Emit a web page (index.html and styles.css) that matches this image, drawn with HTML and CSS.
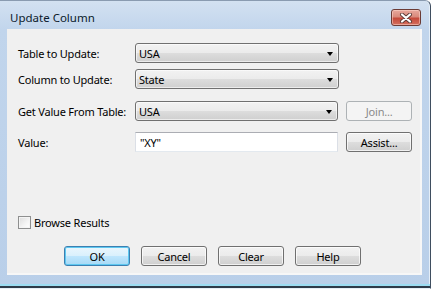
FILE: index.html
```
<!DOCTYPE html>
<html>
<head>
<meta charset="utf-8">
<title>Update Column</title>
<link rel="stylesheet" href="styles.css">
</head>
<body>
<div class="window">
  <div class="titlebar">
    <span class="title">Update Column</span>
    <div class="close" aria-label="Close">
      <svg width="14" height="10" viewBox="0 0 14 10">
        <path d="M3 1.5 L11 8.5 M11 1.5 L3 8.5" stroke="#5b3a36" stroke-width="4" stroke-linecap="round"/>
        <path d="M3 1.5 L11 8.5 M11 1.5 L3 8.5" stroke="#ffffff" stroke-width="2.2" stroke-linecap="round"/>
      </svg>
    </div>
  </div>
  <div class="client">
    <div class="row">
      <span class="lbl">Table to Update:</span>
      <div class="combo"><span class="val">USA</span><span class="arrow"></span></div>
    </div>
    <div class="row row2">
      <span class="lbl">Column to Update:</span>
      <div class="combo"><span class="val">State</span><span class="arrow"></span></div>
    </div>
    <div class="row row3">
      <span class="lbl">Get Value From Table:</span>
      <div class="combo"><span class="val">USA</span><span class="arrow"></span></div>
      <div class="btn side disabled">Join...</div>
    </div>
    <div class="row row4">
      <span class="lbl">Value:</span>
      <div class="textbox">"XY"</div>
      <div class="btn side">Assist...</div>
    </div>
    <div class="check"><span class="box"></span><span>Browse Results</span></div>
    <div class="buttons">
      <div class="btn wide default">OK</div>
      <div class="btn wide">Cancel</div>
      <div class="btn wide">Clear</div>
      <div class="btn wide">Help</div>
    </div>
  </div>
</div>
</body>
</html>
```
FILE: styles.css
```
html, body {
  margin: 0;
  padding: 0;
  background: #ffffff;
}
body {
  width: 431px;
  height: 289px;
  overflow: hidden;
  font-family: "Noto Sans", "Open Sans", sans-serif;
  font-size: 11px;
  letter-spacing: -0.2px;
  color: #000;
}
.window {
  box-sizing: border-box;
  width: 431px;
  height: 289px;
  display: flex;
  flex-direction: column;
  padding: 0 8px 0 7px;
  background: linear-gradient(to bottom, #d3e1f1 0px, #c1d5ec 29px, #b9cfe9 100%);
  border-right: 1px solid #3f4e60;
  border-top: 1px solid #8a9bb0;
  border-bottom: 1px solid #e6eef6;
  box-shadow: inset 0 -2px 0 #2e3b4a, inset 0 -4px 0 #9cdcf2, inset -1px 0 0 #e4eef8;
  border-top-right-radius: 6px;
}
.titlebar {
  height: 28px;
  display: flex;
  align-items: flex-start;
}
.title {
  font-size: 11.5px;
  letter-spacing: 0;
  margin: 9px 0 0 3px;
  color: #0b1a2b;
}
.close {
  margin: 8px 1px 0 auto;
  width: 28px;
  height: 15px;
  border: 1px solid #6b3b35;
  border-radius: 3px;
  background: linear-gradient(to bottom, #e8a89c 0%, #d98a7c 45%, #c5493a 55%, #d4705f 100%);
  box-shadow: inset 0 0 0 1px rgba(255, 220, 210, 0.5);
  display: flex;
  align-items: center;
  justify-content: center;
}
.client {
  height: 246px;
  box-sizing: border-box;
  background: #f0f0f0;
  display: flex;
  flex-direction: column;
  padding: 14px 10px 9px 11px;
  box-shadow: inset -2px -2px 0 #f7f7f7;
}
.row {
  display: flex;
  align-items: center;
  height: 20px;
}
.row2 { margin-top: 6px; }
.row3 { margin-top: 12px; }
.row4 { margin-top: 11px; }
.lbl {
  width: 117px;
  flex: none;
}
.combo {
  box-sizing: border-box;
  width: 204px;
  height: 20px;
  border: 1px solid #707070;
  border-radius: 3px;
  background: linear-gradient(to bottom, #f2f2f2 0%, #ebebeb 50%, #dddddd 51%, #cfcfcf 100%);
  box-shadow: inset 0 0 0 1px rgba(255, 255, 255, 0.6);
  display: flex;
  align-items: center;
  padding: 0 5px 0 3px;
}
.val { flex: 1; }
.arrow {
  width: 0;
  height: 0;
  border-left: 3.5px solid transparent;
  border-right: 3.5px solid transparent;
  border-top: 4px solid #000;
  margin-top: 1px;
}
.textbox {
  box-sizing: border-box;
  width: 204px;
  height: 20px;
  background: #ffffff;
  border: 1px solid #e3e9ef;
  border-top-color: #abadb3;
  border-left-color: #dbdfe6;
  border-right-color: #dbdfe6;
  display: flex;
  align-items: center;
  padding-left: 4px;
}
.btn {
  box-sizing: border-box;
  height: 20px;
  border: 1px solid #707070;
  border-radius: 3px;
  background: linear-gradient(to bottom, #f2f2f2 0%, #ebebeb 50%, #dddddd 51%, #cfcfcf 100%);
  box-shadow: inset 0 0 0 1px rgba(255, 255, 255, 0.7);
  display: flex;
  align-items: center;
  justify-content: center;
}
.side {
  width: 66px;
  margin-left: 8px;
}
.disabled {
  border-color: #adb2b5;
  background: #f4f4f4;
  color: #8a8a8a;
  box-shadow: none;
}
.check {
  margin-top: auto;
  display: flex;
  align-items: center;
  gap: 3px;
  height: 14px;
}
.box {
  box-sizing: border-box;
  width: 13px;
  height: 13px;
  border: 1px solid #8e8f8f;
  background: linear-gradient(135deg, #dcdcdc 0%, #f4f4f4 60%, #ffffff 100%);
  box-shadow: inset 0 0 0 1px #f4f4f4;
}
.buttons {
  margin-top: 17px;
  display: flex;
  gap: 11px;
  padding-left: 46px;
}
.wide {
  width: 66px;
}
.default {
  border-color: #3c7fb1;
  background: linear-gradient(to bottom, #eaf6fd 0%, #d9f0fc 50%, #bee6fd 51%, #a7d9f5 100%);
  box-shadow: inset 0 0 0 1px #5ec8f0;
}
```
